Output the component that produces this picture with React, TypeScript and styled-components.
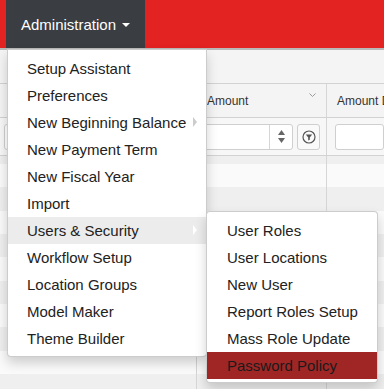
import React from "react";
import styled, { createGlobalStyle } from "styled-components";

const Global = createGlobalStyle`
  html, body { margin: 0; padding: 0; background: #f4f4f4; }
  body { font-family: "Liberation Sans", Arial, sans-serif; overflow: hidden; }
  * { box-sizing: border-box; }
`;

const Page = styled.div`
  width: 384px;
  height: 389px;
  display: flex;
  flex-direction: column;
  overflow: hidden;
  position: relative;
`;

const TopBar = styled.div`
  height: 50px;
  flex-shrink: 0;
  background: #e32222;
  border-bottom: 2px solid #b9b9b9;
  padding-left: 6px;
  display: flex;
  position: relative;
  z-index: 5;
`;

const NavTab = styled.div`
  position: relative;
  height: 48px;
  background: #3a3d41;
  color: #fff;
  font-size: 15px;
  display: flex;
  align-items: center;
  padding: 0 15px;
  gap: 6px;
`;

const Caret = styled.span`
  width: 0;
  height: 0;
  border-top: 4px solid #fff;
  border-left: 4px solid transparent;
  border-right: 4px solid transparent;
  margin-top: 1px;
`;

const Toolbar = styled.div`
  height: 34px;
  flex-shrink: 0;
  background: #f4f4f4;
  border-bottom: 1px solid #d2d2d2;
`;

const Row = styled.div<{ $h: number; $bg: string; $border?: boolean }>`
  display: grid;
  grid-template-columns: 197px 130px 1fr;
  height: ${(p) => p.$h}px;
  background: ${(p) => p.$bg};
  border-bottom: ${(p) => (p.$border ? "1px solid #d2d2d2" : "none")};
  flex-shrink: 0;
`;

const Cell = styled.div<{ $pl?: number; $pr?: number; $last?: boolean }>`
  border-right: ${(p) => (p.$last ? "none" : "1px solid #d6d6d6")};
  display: flex;
  align-items: center;
  padding-left: ${(p) => p.$pl ?? 0}px;
  padding-right: ${(p) => p.$pr ?? 0}px;
  font-size: 12px;
  color: #333;
  overflow: hidden;
  white-space: nowrap;
  gap: 2px;
`;

const HeadLabel = styled.span`
  flex: 1;
`;

const SortIcon = styled.svg`
  align-self: flex-start;
  margin-top: 9px;
`;

const InputBox = styled.div<{ $w?: number }>`
  height: 26px;
  width: ${(p) => (p.$w ? `${p.$w}px` : "auto")};
  flex: ${(p) => (p.$w ? "none" : "1")};
  background: #fff;
  border: 1px solid #cfcfcf;
  border-radius: 3px;
  display: flex;
  justify-content: flex-end;
`;

const Spinner = styled.div`
  width: 23px;
  border-left: 1px solid #d6d6d6;
  display: flex;
  flex-direction: column;
  align-items: center;
  justify-content: center;
  gap: 3px;
`;

const FilterBtn = styled.div`
  width: 23px;
  height: 26px;
  border: 1px solid #cfcfcf;
  border-radius: 3px;
  background: #fafafa;
  display: flex;
  align-items: center;
  justify-content: center;
  margin-left: 2px;
`;

const Menu = styled.div`
  position: absolute;
  top: 49px;
  left: 1px;
  width: 200px;
  background: #fff;
  border: 1px solid rgba(0, 0, 0, 0.2);
  border-radius: 0 0 4px 4px;
  box-shadow: 0 6px 12px rgba(0, 0, 0, 0.175);
  padding: 5px 0 4px;
  z-index: 10;
`;

const Item = styled.div<{ $active?: boolean; $danger?: boolean }>`
  position: relative;
  height: 27px;
  line-height: 27px;
  font-size: 15px;
  color: #222;
  padding-left: 19px;
  white-space: nowrap;
  background: ${(p) => (p.$danger ? "#a02626" : p.$active ? "#ececec" : "transparent")};
`;

const SubArrow = styled.span<{ $color: string }>`
  position: absolute;
  right: 9px;
  top: 8px;
  width: 0;
  height: 0;
  border-left: 4px solid ${(p) => p.$color};
  border-top: 5px solid transparent;
  border-bottom: 5px solid transparent;
`;

const SubMenu = styled.div`
  position: absolute;
  left: 198px;
  top: -6px;
  width: 172px;
  background: #fff;
  border: 1px solid rgba(0, 0, 0, 0.2);
  border-radius: 4px;
  box-shadow: 0 6px 12px rgba(0, 0, 0, 0.175);
  padding: 5px 0 3px;
  z-index: 11;
`;

const SubItem = styled(Item)`
  padding-left: 20px;
  color: ${(p) => (p.$danger ? "#1a1a1a" : "#222")};
`;

const mainItems = [
  "Setup Assistant",
  "Preferences",
  "New Beginning Balance",
  "New Payment Term",
  "New Fiscal Year",
  "Import",
  "Users & Security",
  "Workflow Setup",
  "Location Groups",
  "Model Maker",
  "Theme Builder",
];

const subItems = [
  "User Roles",
  "User Locations",
  "New User",
  "Report Roles Setup",
  "Mass Role Update",
  "Password Policy",
];

const dataRows = Array.from({ length: 10 }, (_, i) => i);

export default function App() {
  return (
    <Page>
      <Global />
      <TopBar>
        <NavTab>
          Administration
          <Caret />
          <Menu>
            {mainItems.map((label) => {
              const isUsers = label === "Users & Security";
              return (
                <Item key={label} $active={isUsers}>
                  {label}
                  {label === "New Beginning Balance" && <SubArrow $color="#cccccc" />}
                  {isUsers && <SubArrow $color="#ffffff" />}
                  {isUsers && (
                    <SubMenu>
                      {subItems.map((s) => (
                        <SubItem key={s} $danger={s === "Password Policy"}>
                          {s}
                        </SubItem>
                      ))}
                    </SubMenu>
                  )}
                </Item>
              );
            })}
          </Menu>
        </NavTab>
      </TopBar>
      <Toolbar />
      <Row $h={34} $bg="#f4f4f4" $border>
        <Cell />
        <Cell $pl={10} $pr={10}>
          <HeadLabel>Amount</HeadLabel>
          <SortIcon width="7" height="4" viewBox="0 0 7 4">
            <polyline points="0.5,0.5 3.5,3.5 6.5,0.5" fill="none" stroke="#9a9a9a" strokeWidth="1" />
          </SortIcon>
        </Cell>
        <Cell $pl={10} $last>
          <HeadLabel>Amount Due</HeadLabel>
        </Cell>
      </Row>
      <Row $h={38} $bg="#f7f7f7" $border>
        <Cell $pl={4} $pr={6}>
          <InputBox />
        </Cell>
        <Cell $pl={6} $pr={6}>
          <InputBox>
            <Spinner>
              <svg width="7" height="5" viewBox="0 0 7 5">
                <polygon points="3.5,0 7,5 0,5" fill="#666" />
              </svg>
              <svg width="7" height="5" viewBox="0 0 7 5">
                <polygon points="0,0 7,0 3.5,5" fill="#666" />
              </svg>
            </Spinner>
          </InputBox>
          <FilterBtn>
            <svg width="14" height="14" viewBox="0 0 14 14">
              <circle cx="7" cy="7" r="6" fill="none" stroke="#555" strokeWidth="1.2" />
              <polygon points="3.8,4.6 10.2,4.6 7.8,7.4 7.8,9.8 6.2,10.4 6.2,7.4" fill="#555" />
            </svg>
          </FilterBtn>
        </Cell>
        <Cell $pl={8} $last>
          <InputBox />
        </Cell>
      </Row>
      <Row $h={8} $bg="#efefef">
        <Cell />
        <Cell />
        <Cell $last />
      </Row>
      {dataRows.map((i) => (
        <Row key={i} $h={23.33} $bg={i % 2 === 0 ? "#fafafa" : "#efefef"}>
          <Cell />
          <Cell />
          <Cell $last />
        </Row>
      ))}
    </Page>
  );
}
